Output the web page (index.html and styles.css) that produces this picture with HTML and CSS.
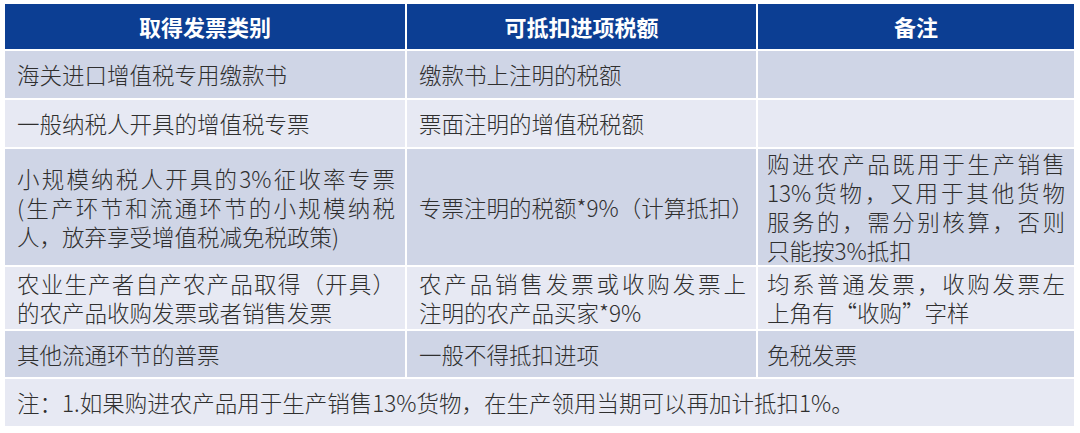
FILE: index.html
```html
<!DOCTYPE html>
<html lang="zh-CN">
<head>
<meta charset="utf-8">
<title>取得发票类别</title>
<link rel="stylesheet" href="styles.css">
</head>
<body>
<table class="tax">
  <colgroup>
    <col class="c1"><col class="c2"><col class="c3">
  </colgroup>
  <thead>
    <tr class="head">
      <th>取得发票类别</th>
      <th>可抵扣进项税额</th>
      <th>备注</th>
    </tr>
  </thead>
  <tbody>
    <tr class="dark r1">
      <td>海关进口增值税专用缴款书</td>
      <td>缴款书上注明的税额</td>
      <td></td>
    </tr>
    <tr class="light r2">
      <td>一般纳税人开具的增值税专票</td>
      <td>票面注明的增值税税额</td>
      <td></td>
    </tr>
    <tr class="dark r3">
      <td><span class="jl">小规模纳税人开具的3%征收率专票</span><span class="jl">(生产环节和流通环节的小规模纳税</span><span class="ln">人，放弃享受增值税减免税政策)</span></td>
      <td class="nw">专票注明的税额*9%（计算抵扣）</td>
      <td class="note3"><span class="jl">购进农产品既用于生产销售</span><span class="jl">13%货物，又用于其他货物</span><span class="jl">服务的，需分别核算，否则</span><span class="ln">只能按3%抵扣</span></td>
    </tr>
    <tr class="light r4">
      <td><span class="jl">农业生产者自产农产品取得（开具）</span><span class="ln">的农产品收购发票或者销售发票</span></td>
      <td><span class="jl">农产品销售发票或收购发票上</span><span class="ln">注明的农产品买家*9%</span></td>
      <td class="note3"><span class="jl">均系普通发票，收购发票左</span><span class="ln">上角有“收购”字样</span></td>
    </tr>
    <tr class="dark r5">
      <td>其他流通环节的普票</td>
      <td>一般不得抵扣进项</td>
      <td class="note3">免税发票</td>
    </tr>
    <tr class="light r6">
      <td colspan="3">注：1.如果购进农产品用于生产销售13%货物，在生产领用当期可以再加计抵扣1%。</td>
    </tr>
  </tbody>
</table>
</body>
</html>
```

FILE: styles.css
```css
html, body {
  margin: 0;
  padding: 0;
  background: #ffffff;
}
body {
  padding: 2px 3px;
  font-family: "Noto Sans CJK SC", "Noto Sans", sans-serif;
  color: #2f2f2f;
}
.tax {
  table-layout: fixed;
  border-collapse: separate;
  border-spacing: 2px;
  width: 1073px;
  font-size: 22.5px;
  line-height: 29px;
  font-weight: 300;
}
.c1 { width: 400px; }
.c2 { width: 349px; }
.c3 { width: 316px; }

.tax th {
  background: #0c3e93;
  color: #ffffff;
  font-weight: 700;
  font-size: 22px;
  text-align: center;
  height: 45px;
  padding: 0;
}
.tax td {
  padding: 0 10px 0 12px;
  vertical-align: middle;
  text-align: left;
  white-space: normal;
}
.tax td.note3 {
  padding: 0 9px 0 9px;
}
.dark td { background: #cfd5e6; }
.light td { background: #e7e9f3; }

.r1 td, .r2 td { height: 47px; }
.r3 td { height: 116px; }
.r4 td { height: 62px; }
.r5 td { height: 46px; }
.r6 td { height: 47px; }

.jl {
  display: block;
  text-align: justify;
  text-align-last: justify;
  white-space: nowrap;
}
.ln {
  display: block;
  white-space: nowrap;
}
.tax td.nw { white-space: nowrap; }
```
